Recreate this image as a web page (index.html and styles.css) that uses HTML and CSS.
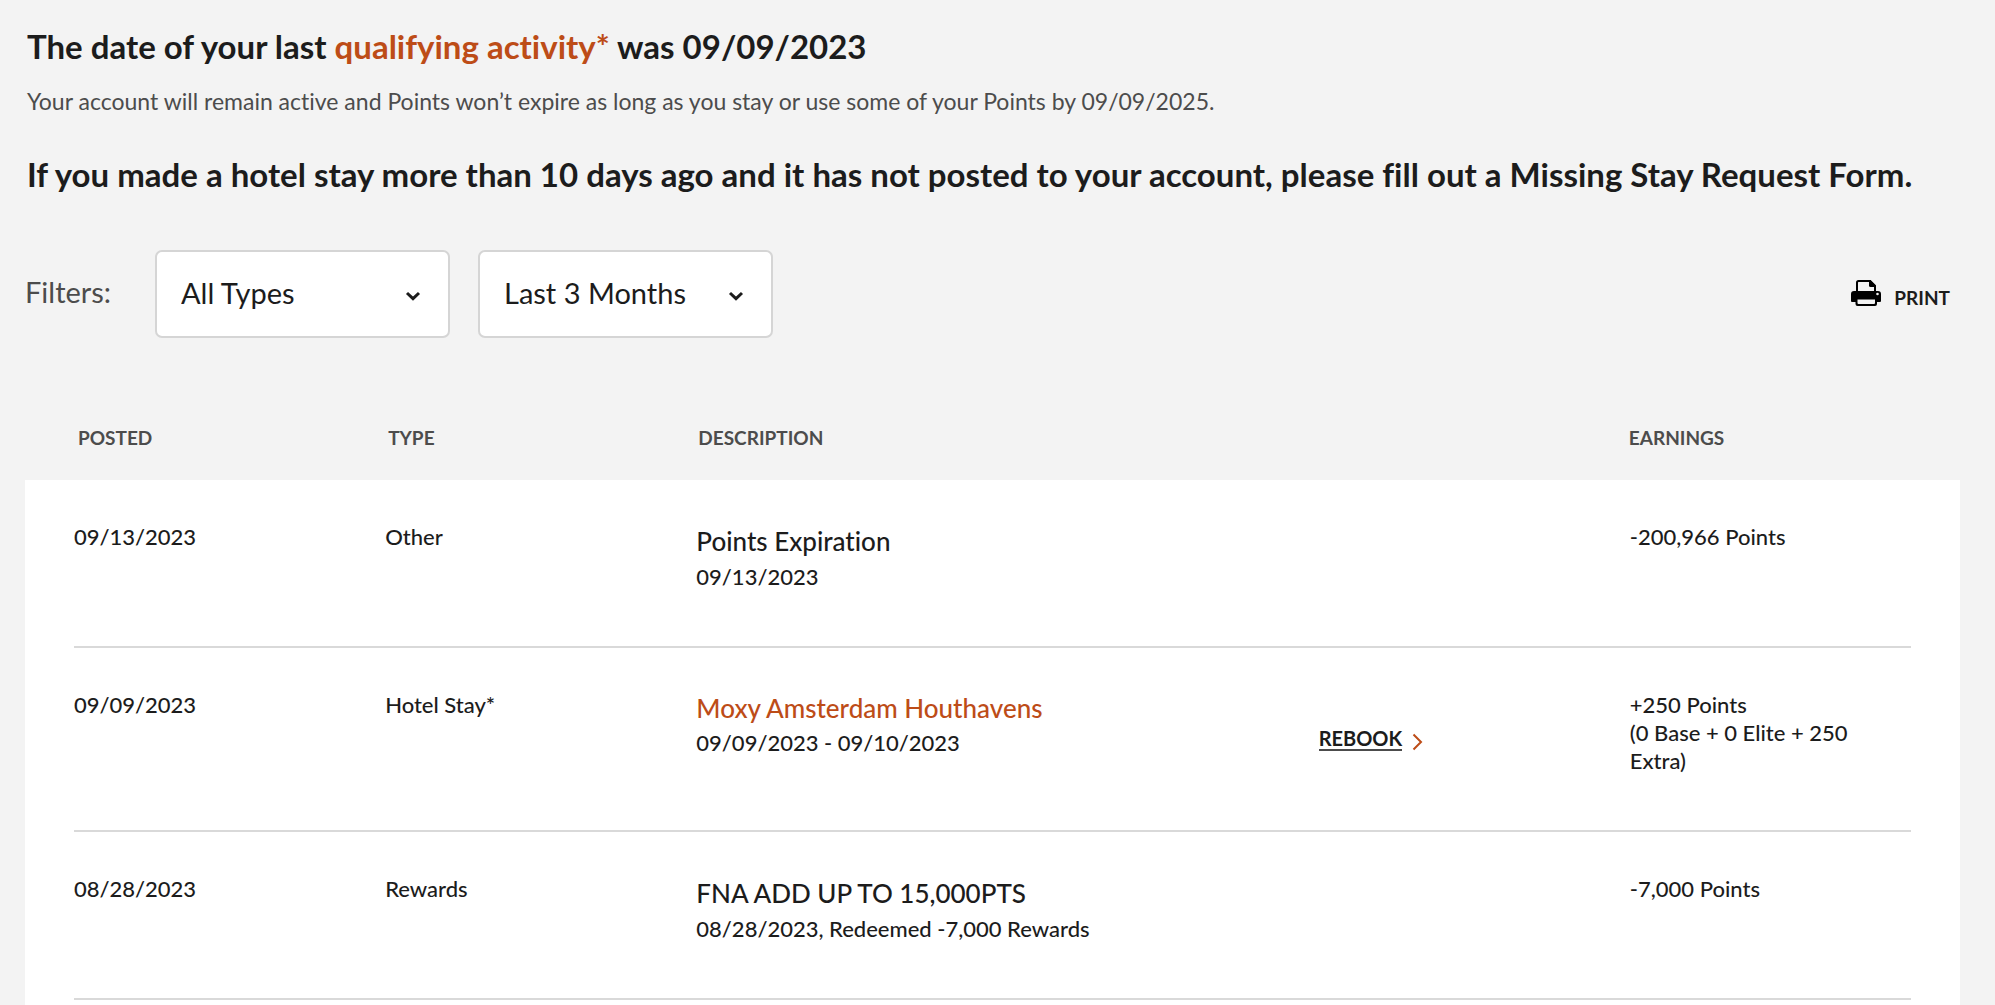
FILE: index.html
```
<!DOCTYPE html>
<html lang="en">
<head>
  <meta charset="UTF-8">
  <meta name="viewport" content="width=device-width, initial-scale=1.0">
  <title>Account Activity</title>
  <link rel="stylesheet" href="styles.css">
</head>
<body>
  <main class="activity">
    <div class="intro">
      <h2>The date of your last <a href="#qualifying">qualifying activity*</a> was 09/09/2023</h2>
      <p>Your account will remain active and Points won’t expire as long as you stay or use some of your Points by 09/09/2025.</p>
      <h2>If you made a hotel stay more than 10 days ago and it has not posted to your account, please fill out a Missing Stay Request Form.</h2>
    </div>

    <div class="toolbar">
      <label class="filter-label" for="type">Filters:</label>
      <div class="select-box">
        <select id="type">
          <option>All Types</option>
          <option>Hotel Stay</option>
          <option>Rewards</option>
          <option>Other</option>
        </select>
        <svg class="caret" viewBox="0 0 16 10" aria-hidden="true"><path d="M2 2l6 5.600L14 2"/></svg>
      </div>
      <div class="select-box">
        <select id="period" aria-label="Period">
          <option>Last 3 Months</option>
          <option>Last 6 Months</option>
          <option>Last 12 Months</option>
        </select>
        <svg class="caret" viewBox="0 0 16 10" aria-hidden="true"><path d="M2 2l6 5.600L14 2"/></svg>
      </div>
      <button type="button" class="print-btn">
        <svg class="print-icon" viewBox="0 0 30 26" aria-hidden="true">
          <path d="M6 12V2.500Q6 1 7.500 1H19l5 5v6" fill="none" stroke="#000" stroke-width="2"/>
          <path d="M18 0h1.500L25 5.500V7h-5.500Q18 7 18 5.500z"/>
          <path fill-rule="evenodd" d="M3 11h24q3 0 3 3v7q0 1-1 1h-3v2q0 2-2 2H6.500q-2 0-2-2v-2H1q-1 0-1-1v-7q0-3 3-3zM6.500 19.500V23q0 1 1 1h15.500q1 0 1-1v-3.500zM26.500 12.700a1.300 1.300 0 1 0 0 2.600 1.300 1.300 0 0 0 0-2.600z"/>
        </svg>
        <span>PRINT</span>
      </button>
    </div>

    <table class="activity-table">
      <thead>
        <tr>
          <th>POSTED</th>
          <th>TYPE</th>
          <th class="desc">DESCRIPTION</th>
          <th></th>
          <th>EARNINGS</th>
        </tr>
      </thead>
      <tbody>
        <tr>
          <td>09/13/2023</td>
          <td>Other</td>
          <td class="desc">
            <div class="title">Points Expiration</div>
            <div>09/13/2023</div>
          </td>
          <td></td>
          <td>-200,966 Points</td>
        </tr>
        <tr>
          <td>09/09/2023</td>
          <td>Hotel Stay*</td>
          <td class="desc">
            <a class="title" href="#hotel">Moxy Amsterdam Houthavens</a>
            <div>09/09/2023 - 09/10/2023</div>
          </td>
          <td>
            <a class="rebook" href="#rebook">
              <span>REBOOK</span>
              <svg class="arrow" viewBox="0 0 11 18" aria-hidden="true"><path d="M1.500 1.500L9 9l-7.500 7.500"/></svg>
            </a>
          </td>
          <td>+250 Points<br>(0 Base + 0 Elite + 250 Extra)</td>
        </tr>
        <tr>
          <td>08/28/2023</td>
          <td>Rewards</td>
          <td class="desc">
            <div class="title">FNA ADD UP TO 15,000PTS</div>
            <div>08/28/2023, Redeemed -7,000 Rewards</div>
          </td>
          <td></td>
          <td>-7,000 Points</td>
        </tr>
      </tbody>
    </table>
  </main>
</body>
</html>
```
FILE: styles.css
```
* {
  box-sizing: border-box;
}
body {
  margin: 0;
  background-color: #f3f3f3;
  color: #1c1c1c;
  font-family: Lato, "Open Sans", sans-serif;
  font-size: 22px;
  font-weight: 500;
  line-height: 28px;
  font-variant-ligatures: none;
}
a {
  color: #bd4c17;
  text-decoration: none;
}
.activity {
  padding: 26px 35px 0 25px;
}
.intro {
  padding-left: 2px;
}
h2 {
  margin: 0;
  font-size: 33px;
  font-weight: 700;
  line-height: 40px;
}
.intro p {
  margin: 21px 0 39px;
  color: #4c4c4c;
  font-size: 23px;
  font-weight: 400;
}

/* filters */
.toolbar {
  display: flex;
  align-items: center;
  margin-top: 56px;
}
.filter-label {
  width: 130px;
  padding-bottom: 4px;
  color: #4c4c4c;
  font-size: 29px;
  font-weight: 400;
}
.select-box {
  position: relative;
  width: 295px;
  margin-right: 28px;
}
.select-box select {
  width: 100%;
  height: 88px;
  padding: 0 60px 4px 24px;
  border: 2px solid #d5d5d5;
  border-radius: 7px;
  background-color: #fff;
  color: #1c1c1c;
  font-family: inherit;
  font-size: 29px;
  appearance: none;
}
.caret {
  position: absolute;
  top: 41px;
  right: 29px;
  width: 16px;
  height: 10px;
  fill: none;
  stroke: #1c1c1c;
  stroke-width: 3;
  pointer-events: none;
}
.print-btn {
  display: flex;
  align-items: flex-end;
  gap: 13px;
  margin-left: auto;
  padding: 4px 10px 0 0;
  border: none;
  background: none;
  color: #1c1c1c;
  font-family: inherit;
  font-size: 19px;
  font-weight: 700;
  line-height: 28px;
  cursor: pointer;
}
.print-icon {
  width: 30px;
  height: 26px;
  margin-bottom: 6px;
}

/* activity list */
.activity-table,
.activity-table thead,
.activity-table tbody {
  display: block;
}
.activity-table tr {
  display: grid;
  grid-template-columns: repeat(6, 1fr);
  column-gap: 30px;
}
.activity-table thead {
  padding: 86px 51px 28px 53px;
}
.activity-table th {
  padding: 0;
  color: #4c4c4c;
  font-size: 19px;
  font-weight: 700;
  text-align: left;
}
.activity-table .desc {
  grid-column: span 2;
}
.activity-table tbody {
  padding: 0 49px 5px;
  background-color: #fff;
}
.activity-table tbody tr {
  padding: 43px 0 55px;
  border-bottom: 2px solid #d9d9d9;
}
.activity-table td {
  padding: 0;
}
.activity-table td:last-child {
  padding-right: 20px;
}
.title {
  display: block;
  margin-bottom: 4px;
  font-size: 26px;
  line-height: 36px;
}
a.title {
  line-height: 34px;
}
.rebook {
  display: flex;
  align-items: center;
  gap: 10px;
  margin-top: 36px;
  color: #1c1c1c;
  font-size: 20px;
  font-weight: 700;
}
.rebook span {
  border-bottom: 2px solid #4c4c4c;
  line-height: 22px;
}
.arrow {
  width: 11px;
  height: 18px;
  margin-top: 6px;
  fill: none;
  stroke: #bd4c17;
  stroke-width: 2;
}
```
